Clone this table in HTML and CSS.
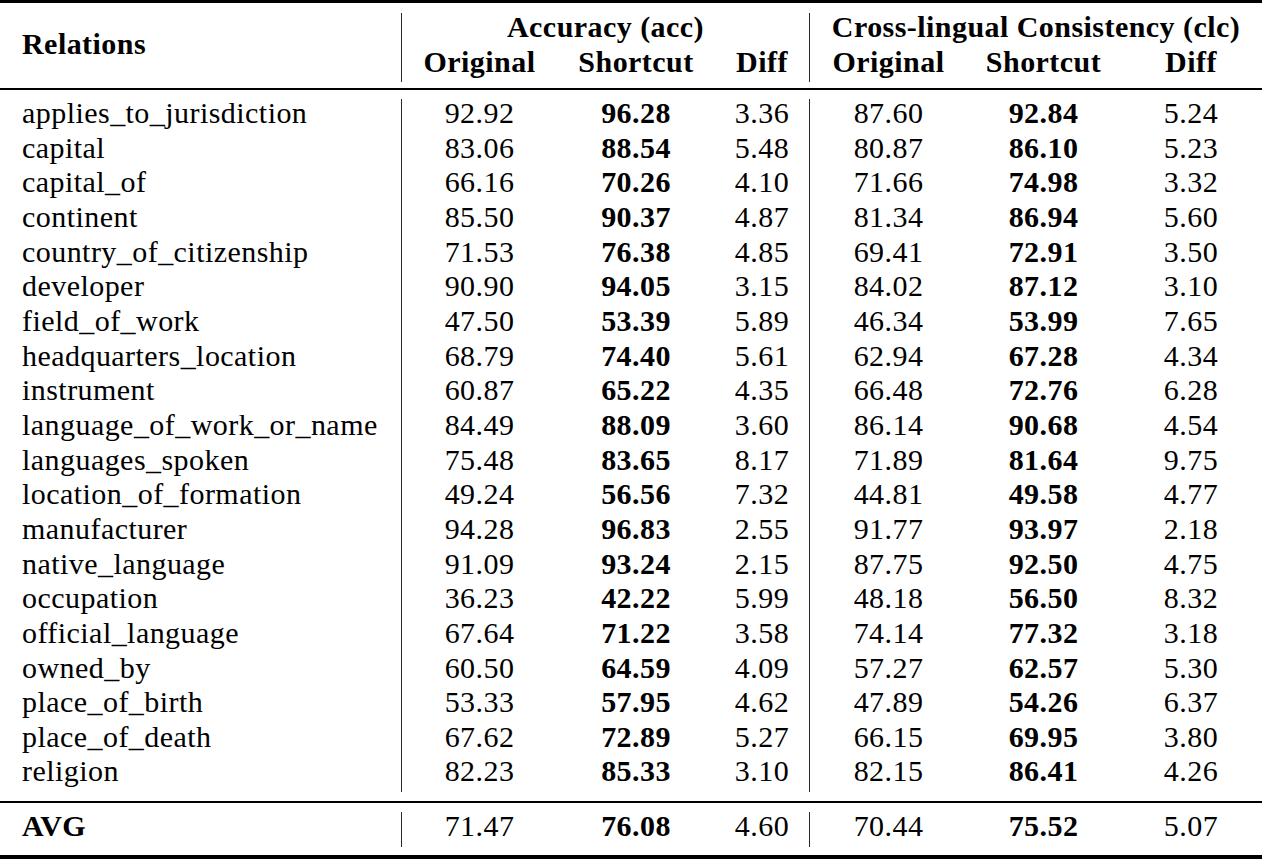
FILE: index.html
```html
<!DOCTYPE html>
<html lang="en">
<head>
<meta charset="utf-8">
<title>Relations – Accuracy and Cross-lingual Consistency</title>
<link rel="stylesheet" href="styles.css">
</head>
<body>
<div class="table">
  <div class="rule heavy top"></div>
  <div class="grid head">
    <div class="cell name rel">Relations</div>
    <div class="cell group v">Accuracy (acc)</div>
    <div class="cell group v">Cross-lingual Consistency (clc)</div>
    <div class="cell hd v">Original</div>
    <div class="cell hd">Shortcut</div>
    <div class="cell hd">Diff</div>
    <div class="cell hd v">Original</div>
    <div class="cell hd">Shortcut</div>
    <div class="cell hd">Diff</div>
  </div>
  <div class="rule mid"></div>
  <div class="grid body">
    <div class="cell name">applies_to_jurisdiction</div><div class="cell v">92.92</div><div class="cell b">96.28</div><div class="cell">3.36</div><div class="cell v">87.60</div><div class="cell b">92.84</div><div class="cell">5.24</div>
    <div class="cell name">capital</div><div class="cell v">83.06</div><div class="cell b">88.54</div><div class="cell">5.48</div><div class="cell v">80.87</div><div class="cell b">86.10</div><div class="cell">5.23</div>
    <div class="cell name">capital_of</div><div class="cell v">66.16</div><div class="cell b">70.26</div><div class="cell">4.10</div><div class="cell v">71.66</div><div class="cell b">74.98</div><div class="cell">3.32</div>
    <div class="cell name">continent</div><div class="cell v">85.50</div><div class="cell b">90.37</div><div class="cell">4.87</div><div class="cell v">81.34</div><div class="cell b">86.94</div><div class="cell">5.60</div>
    <div class="cell name">country_of_citizenship</div><div class="cell v">71.53</div><div class="cell b">76.38</div><div class="cell">4.85</div><div class="cell v">69.41</div><div class="cell b">72.91</div><div class="cell">3.50</div>
    <div class="cell name">developer</div><div class="cell v">90.90</div><div class="cell b">94.05</div><div class="cell">3.15</div><div class="cell v">84.02</div><div class="cell b">87.12</div><div class="cell">3.10</div>
    <div class="cell name">field_of_work</div><div class="cell v">47.50</div><div class="cell b">53.39</div><div class="cell">5.89</div><div class="cell v">46.34</div><div class="cell b">53.99</div><div class="cell">7.65</div>
    <div class="cell name">headquarters_location</div><div class="cell v">68.79</div><div class="cell b">74.40</div><div class="cell">5.61</div><div class="cell v">62.94</div><div class="cell b">67.28</div><div class="cell">4.34</div>
    <div class="cell name">instrument</div><div class="cell v">60.87</div><div class="cell b">65.22</div><div class="cell">4.35</div><div class="cell v">66.48</div><div class="cell b">72.76</div><div class="cell">6.28</div>
    <div class="cell name">language_of_work_or_name</div><div class="cell v">84.49</div><div class="cell b">88.09</div><div class="cell">3.60</div><div class="cell v">86.14</div><div class="cell b">90.68</div><div class="cell">4.54</div>
    <div class="cell name">languages_spoken</div><div class="cell v">75.48</div><div class="cell b">83.65</div><div class="cell">8.17</div><div class="cell v">71.89</div><div class="cell b">81.64</div><div class="cell">9.75</div>
    <div class="cell name">location_of_formation</div><div class="cell v">49.24</div><div class="cell b">56.56</div><div class="cell">7.32</div><div class="cell v">44.81</div><div class="cell b">49.58</div><div class="cell">4.77</div>
    <div class="cell name">manufacturer</div><div class="cell v">94.28</div><div class="cell b">96.83</div><div class="cell">2.55</div><div class="cell v">91.77</div><div class="cell b">93.97</div><div class="cell">2.18</div>
    <div class="cell name">native_language</div><div class="cell v">91.09</div><div class="cell b">93.24</div><div class="cell">2.15</div><div class="cell v">87.75</div><div class="cell b">92.50</div><div class="cell">4.75</div>
    <div class="cell name">occupation</div><div class="cell v">36.23</div><div class="cell b">42.22</div><div class="cell">5.99</div><div class="cell v">48.18</div><div class="cell b">56.50</div><div class="cell">8.32</div>
    <div class="cell name">official_language</div><div class="cell v">67.64</div><div class="cell b">71.22</div><div class="cell">3.58</div><div class="cell v">74.14</div><div class="cell b">77.32</div><div class="cell">3.18</div>
    <div class="cell name">owned_by</div><div class="cell v">60.50</div><div class="cell b">64.59</div><div class="cell">4.09</div><div class="cell v">57.27</div><div class="cell b">62.57</div><div class="cell">5.30</div>
    <div class="cell name">place_of_birth</div><div class="cell v">53.33</div><div class="cell b">57.95</div><div class="cell">4.62</div><div class="cell v">47.89</div><div class="cell b">54.26</div><div class="cell">6.37</div>
    <div class="cell name">place_of_death</div><div class="cell v">67.62</div><div class="cell b">72.89</div><div class="cell">5.27</div><div class="cell v">66.15</div><div class="cell b">69.95</div><div class="cell">3.80</div>
    <div class="cell name">religion</div><div class="cell v">82.23</div><div class="cell b">85.33</div><div class="cell">3.10</div><div class="cell v">82.15</div><div class="cell b">86.41</div><div class="cell">4.26</div>
  </div>
  <div class="rule mid"></div>
  <div class="grid foot">
    <div class="cell name b">AVG</div><div class="cell v">71.47</div><div class="cell b">76.08</div><div class="cell">4.60</div><div class="cell v">70.44</div><div class="cell b">75.52</div><div class="cell">5.07</div>
  </div>
  <div class="rule heavy bottom"></div>
</div>
</body>
</html>
```
FILE: styles.css
```css
html, body {
  margin: 0;
  padding: 0;
  background: #ffffff;
}

body {
  font-family: "Liberation Serif", "Times New Roman", serif;
  font-size: 30px;
  color: #000000;
}

.table {
  width: 1262px;
}

.rule {
  background: #000000;
}

.rule.heavy.top {
  height: 3px;
}

.rule.heavy.bottom {
  height: 4px;
}

.rule.mid {
  height: 2px;
}

.grid {
  display: grid;
  grid-template-columns: 401px 156px 158px 94px 158px 153px 142px;
}

.head {
  padding: 10px 0 5.7px;
}

.body {
  padding: 9px 0 8.8px;
}

.foot {
  padding: 9px 0 8.3px;
}

.cell {
  line-height: 28.34px;
  padding-bottom: 6.32px;
  text-align: center;
  letter-spacing: 0.45px;
  white-space: nowrap;
}

.cell.name {
  text-align: left;
  padding-left: 22px;
}

.cell.v {
  border-left: 1px solid #2a2a2a;
}

.cell.b,
.cell.hd,
.cell.group,
.cell.rel {
  font-weight: bold;
}

.cell.rel {
  grid-row: 1 / span 2;
  align-self: center;
  padding-bottom: 6.96px;
}

.head .group:nth-child(2) {
  grid-column: 2 / span 3;
}

.head .group:nth-child(3) {
  grid-column: 5 / span 3;
}
```
